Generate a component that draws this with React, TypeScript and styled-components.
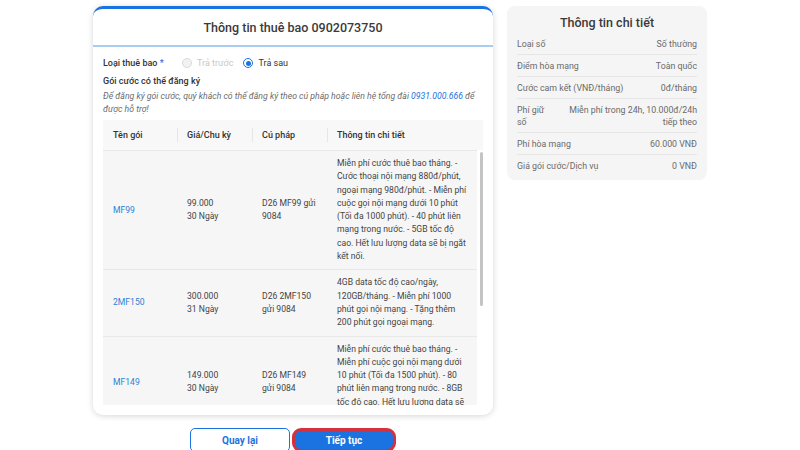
import React from "react";
import styled, {createGlobalStyle} from "styled-components";

const GlobalStyle = createGlobalStyle`
  html, body {
    margin: 0;
    padding: 0;
    background: #ffffff;
    overflow: hidden;
  }
  body {
    font-family: Roboto, "Noto Sans", sans-serif;
    color: #333;
  }
`

const Page = styled.div`
  width: 800px;
  height: 450px;
  display: flex;
  justify-content: center;
  align-items: flex-start;
  gap: 14px;
  padding-top: 6px;
  box-sizing: border-box;
`

const LeftColumn = styled.div`
  width: 400px;
  display: flex;
  flex-direction: column;
  align-items: center;
`

const Card = styled.div`
  width: 100%;
  background: #fff;
  border-top: 3px solid #1a73e0;
  border-radius: 10px;
  box-shadow: 0 1px 6px rgba(0, 0, 0, 0.16);
  box-sizing: border-box;
`

const CardHeader = styled.div`
  height: 36px;
  display: flex;
  align-items: center;
  justify-content: center;
  font-size: 12.5px;
  font-weight: 500;
  color: #3a3a3a;
  border-bottom: 2px solid #a9cdf1;
`

const CardBody = styled.div`
  padding: 8px 10px 10px;
`

const FieldRow = styled.div`
  display: flex;
  align-items: center;
  height: 16px;
  font-size: 9px;
  font-weight: 500;
  color: #333;
`

const FieldLabel = styled.span`
  width: 79px;
`

const Star = styled.span`
  color: #1a73e0;
`

const RadioOption = styled.label<{ $disabled?: boolean }>`
  display: flex;
  align-items: center;
  gap: 5px;
  margin-right: 10px;
  font-weight: 400;
  color: ${props => props.$disabled ? '#c8c8c8' : '#333'};
`

const RadioCircle = styled.span<{ $checked?: boolean; $disabled?: boolean }>`
  width: 10px;
  height: 10px;
  border-radius: 50%;
  box-sizing: border-box;
  border: 1px solid ${props => props.$checked ? '#1a73e0' : '#dadada'};
  background: ${props => props.$disabled ? '#f2f2f2' : '#fff'};
  display: flex;
  align-items: center;
  justify-content: center;

  &::after {
    content: '';
    display: ${props => props.$checked ? 'block' : 'none'};
    width: 5px;
    height: 5px;
    border-radius: 50%;
    background: #1a73e0;
  }
`

const SectionTitle = styled.div`
  margin-top: 2px;
  font-size: 9px;
  font-weight: 500;
  line-height: 16px;
  color: #333;
`

const Note = styled.div`
  margin-top: 1px;
  font-size: 8.7px;
  font-style: italic;
  line-height: 13px;
  color: #6b6b6b;
`

const Hotline = styled.span`
  color: #1a73e0;
`

const Table = styled.div`
  margin-top: 4px;
  position: relative;
`

const Grid = styled.div`
  display: grid;
  grid-template-columns: 74px 75px 75px 1fr;
`

const HeadRow = styled(Grid)`
  height: 30px;
  background: #f8f8f9;
  font-size: 9px;
  font-weight: 500;
  color: #333;
`

const HeadCell = styled.div<{ $divider?: boolean }>`
  display: flex;
  align-items: center;
  padding-left: 10px;
  position: relative;

  &::before {
    content: '';
    display: ${props => props.$divider ? 'block' : 'none'};
    position: absolute;
    left: 0;
    top: 8px;
    height: 14px;
    width: 1px;
    background: #e6e6e6;
  }
`

const Viewport = styled.div`
  height: 255px;
  overflow: hidden;
  margin-right: 6px;
`

const BodyRow = styled(Grid)`
  background: #f6f6f6;
  border-top: 1px solid #e9e9e9;
  font-size: 8.6px;
  line-height: 13.3px;
  color: #444;
`

const Cell = styled.div`
  display: flex;
  align-items: center;
  padding: 6px 9px 6px 10px;
`

const DetailCell = styled(Cell)`
  padding: 6px 7px 6px 10px;
`

const PackName = styled.span`
  color: #2f7fd6;
`

const ScrollThumb = styled.div`
  position: absolute;
  right: 0;
  top: 32px;
  width: 3px;
  height: 154px;
  border-radius: 2px;
  background: #c4c4c4;
`

const Actions = styled.div`
  display: flex;
  gap: 2px;
  margin-top: 13px;
`

const OutlineButton = styled.button`
  width: 100px;
  height: 24px;
  border: 1px solid #1a73e0;
  border-radius: 5px;
  background: #fff;
  color: #1a73e0;
  font-family: inherit;
  font-size: 10px;
  font-weight: 700;
`

const PrimaryButton = styled.button`
  width: 104px;
  height: 24px;
  border: 3px solid #d2313d;
  border-radius: 9px;
  background: #1a73e0;
  color: #fff;
  font-family: inherit;
  font-size: 10px;
  font-weight: 700;
`

const SideCard = styled.div`
  width: 200px;
  background: #f5f5f5;
  border-radius: 8px;
  padding: 7px 10px 4px;
  box-sizing: border-box;
`

const SideTitle = styled.div`
  text-align: center;
  font-size: 12.5px;
  font-weight: 500;
  color: #3a3a3a;
  line-height: 20px;
`

const InfoRow = styled.div<{ $last?: boolean }>`
  display: flex;
  justify-content: space-between;
  gap: 8px;
  padding: 4.5px 0;
  border-bottom: ${props => props.$last ? 'none' : '1px solid #e6e6e6'};
  font-size: 8.8px;
  line-height: 12px;
  color: #6a6a6a;
`

const InfoLabel = styled.span`
  flex-shrink: 10;
  min-width: 30px;
`

const InfoValue = styled.span`
  text-align: right;
`

type Pack = {
  name: string;
  price: string;
  cycle: string;
  syntax: string;
  detail: string;
}

const packs: Pack[] = [
  {
    name: 'MF99', price: '99.000', cycle: '30 Ngày', syntax: 'D26 MF99 gửi 9084',
    detail: 'Miễn phí cước thuê bao tháng. - Cước thoại nội mạng 880đ/phút, ngoại mạng 980đ/phút. - Miễn phí cuộc gọi nội mạng dưới 10 phút (Tối đa 1000 phút). - 40 phút liên mạng trong nước. - 5GB tốc độ cao. Hết lưu lượng data sẽ bị ngắt kết nối.'
  },
  {
    name: '2MF150', price: '300.000', cycle: '31 Ngày', syntax: 'D26 2MF150 gửi 9084',
    detail: '4GB data tốc độ cao/ngày, 120GB/tháng. - Miễn phí 1000 phút gọi nội mạng. - Tặng thêm 200 phút gọi ngoại mạng.'
  },
  {
    name: 'MF149', price: '149.000', cycle: '30 Ngày', syntax: 'D26 MF149 gửi 9084',
    detail: 'Miễn phí cước thuê bao tháng. - Miễn phí cuộc gọi nội mạng dưới 10 phút (Tối đa 1500 phút). - 80 phút liên mạng trong nước. - 8GB tốc độ cao. Hết lưu lượng data sẽ bị ngắt kết nối.'
  },
]

const details = [
  ['Loại số', 'Số thường'],
  ['Điểm hòa mạng', 'Toàn quốc'],
  ['Cước cam kết (VNĐ/tháng)', '0đ/tháng'],
  ['Phí giữ số', 'Miễn phí trong 24h, 10.000đ/24h tiếp theo'],
  ['Phí hòa mạng', '60.000 VNĐ'],
  ['Giá gói cước/Dịch vụ', '0 VNĐ'],
]

const App: React.FC = () => {
  return <>
    <GlobalStyle/>
    <Page>
      <LeftColumn>
        <Card>
          <CardHeader>Thông tin thuê bao 0902073750</CardHeader>
          <CardBody>
            <FieldRow>
              <FieldLabel>Loại thuê bao <Star>*</Star></FieldLabel>
              <RadioOption $disabled><RadioCircle $disabled/>Trả trước</RadioOption>
              <RadioOption><RadioCircle $checked/>Trả sau</RadioOption>
            </FieldRow>
            <SectionTitle>Gói cước có thể đăng ký</SectionTitle>
            <Note>
              Để đăng ký gói cước, quý khách có thể đăng ký theo cú pháp hoặc liên hệ tổng đài <Hotline>0931.000.666</Hotline> để được hỗ trợ!
            </Note>
            <Table>
              <HeadRow>
                <HeadCell>Tên gói</HeadCell>
                <HeadCell $divider>Giá/Chu kỳ</HeadCell>
                <HeadCell $divider>Cú pháp</HeadCell>
                <HeadCell $divider>Thông tin chi tiết</HeadCell>
              </HeadRow>
              <Viewport>
                {packs.map(pack =>
                  <BodyRow key={pack.name}>
                    <Cell><PackName>{pack.name}</PackName></Cell>
                    <Cell>{pack.price}<br/>{pack.cycle}</Cell>
                    <Cell>{pack.syntax}</Cell>
                    <DetailCell>{pack.detail}</DetailCell>
                  </BodyRow>
                )}
              </Viewport>
              <ScrollThumb/>
            </Table>
          </CardBody>
        </Card>
        <Actions>
          <OutlineButton>Quay lại</OutlineButton>
          <PrimaryButton>Tiếp tục</PrimaryButton>
        </Actions>
      </LeftColumn>
      <SideCard>
        <SideTitle>Thông tin chi tiết</SideTitle>
        {details.map(([label, value], i) =>
          <InfoRow key={label} $last={i === details.length - 1}>
            <InfoLabel>{label}</InfoLabel>
            <InfoValue>{value}</InfoValue>
          </InfoRow>
        )}
      </SideCard>
    </Page>
  </>
}

export default App
